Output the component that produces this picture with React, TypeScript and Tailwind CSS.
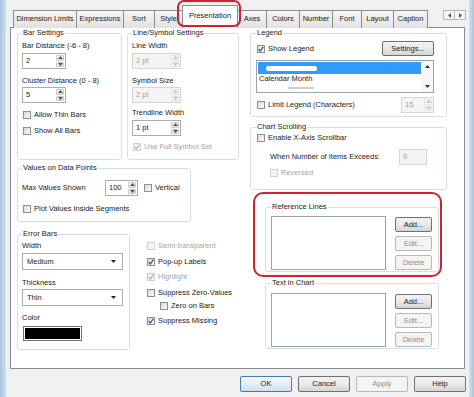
import React from "react";

const ui = "font-['Liberation_Sans',Arial,sans-serif] text-[7.5px] leading-[10px] text-[#1b1b1b]";

function Tick({ dim }: { dim?: boolean }) {
  return (
    <svg width="6" height="6" viewBox="0 0 6 6">
      <path d="M0.7 3.1 L2.3 5 L5.4 0.7" fill="none" stroke={dim ? "#a7b2c6" : "#34508e"} strokeWidth="1.2" />
    </svg>
  );
}

function Arrow({ dir, color = "#444" }: { dir: "up" | "down" | "left" | "right"; color?: string }) {
  const d = {
    up: "M0 3 L2.5 0 L5 3Z",
    down: "M0 0 L5 0 L2.5 3Z",
    left: "M3 0 L3 5 L0 2.5Z",
    right: "M0 0 L0 5 L3 2.5Z",
  }[dir];
  const vert = dir === "up" || dir === "down";
  return (
    <svg width={vert ? 5 : 3} height={vert ? 3 : 5} viewBox={vert ? "0 0 5 3" : "0 0 3 5"}>
      <path d={d} fill={color} />
    </svg>
  );
}

function Check({ label, checked, disabled, className = "" }: { label: string; checked?: boolean; disabled?: boolean; className?: string }) {
  return (
    <div className={`flex items-center h-[10px] ${className}`}>
      <span
        className={`w-[8px] h-[8px] flex items-center justify-center border ${
          disabled ? "border-[#d0d0d0] bg-[#f4f4f4]" : "border-[#8f8f8f] bg-gradient-to-br from-[#d8d8d8] to-[#fbfbfb]"
        }`}
      >
        {checked && <Tick dim={disabled} />}
      </span>
      <span className={`ml-[3px] whitespace-nowrap ${disabled ? "text-[#a5a5a5]" : ""}`}>{label}</span>
    </div>
  );
}

function Spin({ value, disabled, className = "" }: { value: string; disabled?: boolean; className?: string }) {
  const btn = disabled ? "border-[#e3e3e3] bg-[#f7f7f7]" : "border-[#cbcbcb] bg-gradient-to-b from-[#f8f8f8] to-[#e2e2e2]";
  return (
    <div
      className={`flex h-[16px] border ${disabled ? "border-[#d6d6d6] bg-[#f4f4f4] text-[#9d9d9d]" : "border-[#abadb3] bg-white"} ${className}`}
    >
      <span className="flex-1 pl-[3px] leading-[14px] whitespace-nowrap">{value}</span>
      <div className="flex flex-col w-[10px] p-[1px] gap-[1px]">
        <span className={`flex-1 flex items-center justify-center border rounded-[1px] ${btn}`}>
          <Arrow dir="up" color={disabled ? "#c4c4c4" : "#555"} />
        </span>
        <span className={`flex-1 flex items-center justify-center border rounded-[1px] ${btn}`}>
          <Arrow dir="down" color={disabled ? "#c4c4c4" : "#555"} />
        </span>
      </div>
    </div>
  );
}

function Combo({ value, className = "" }: { value: string; className?: string }) {
  return (
    <div className={`flex items-center h-[17px] border border-[#abadb3] bg-white ${className}`}>
      <span className="flex-1 pl-[4px]">{value}</span>
      <span className="mr-[6px] flex">
        <Arrow dir="down" color="#222" />
      </span>
    </div>
  );
}

function Btn({ label, disabled, focus, className = "" }: { label: string; disabled?: boolean; focus?: boolean; className?: string }) {
  const skin = disabled
    ? "border-[#b5b9bc] bg-[#f4f4f4] text-[#8e8e8e]"
    : focus
    ? "border-[#3c7fb1] bg-gradient-to-b from-[#f4f8fb] via-[#e6eef5] to-[#d2dfea]"
    : "border-[#707070] bg-gradient-to-b from-[#f3f3f3] via-[#e9e9e9] to-[#d5d5d5]";
  return (
    <div className={`h-[15px] flex items-center justify-center border rounded-[2px] ${skin} ${className}`}>{label}</div>
  );
}

function Group({ title, className = "", children }: { title: string; className?: string; children?: React.ReactNode }) {
  return (
    <fieldset className={`border border-[#d5dfe5] rounded-[3px] pl-[4px] ${className}`}>
      <legend className="px-[1px] leading-[10px]">{title}</legend>
      {children}
    </fieldset>
  );
}

function ListWithButtons({ top }: { top: string }) {
  return (
    <div className={`flex ${top}`}>
      <div className="w-[115px] h-[54px] border border-[#9ea2a8] bg-white" />
      <div className="ml-[9px] flex flex-col gap-[4px] pt-[1px]">
        <Btn label="Add..." className="w-[37px]" />
        <Btn label="Edit..." disabled className="w-[37px]" />
        <Btn label="Delete" disabled className="w-[37px]" />
      </div>
    </div>
  );
}

const tabs = [
  { name: "Dimension Limits", w: "w-[64px]" },
  { name: "Expressions", w: "w-[48px]" },
  { name: "Sort", w: "w-[32px]" },
  { name: "Style", w: "w-[29px]" },
  { name: "Presentation", w: "w-[56px]", active: true },
  { name: "Axes", w: "w-[30px]" },
  { name: "Colors", w: "w-[34px]" },
  { name: "Number", w: "w-[34px]" },
  { name: "Font", w: "w-[30px]" },
  { name: "Layout", w: "w-[33px]" },
  { name: "Caption", w: "w-[35px]" },
];

export default function App() {
  return (
    <div className={`w-[474px] h-[397px] flex bg-[#f0f0f0] overflow-hidden ${ui}`}>
      <div className="w-[7px] h-full bg-gradient-to-r from-[#a9c3df] to-[#d2e1f1] border-r border-[#eef3f9]" />

      <div className="w-[461px] flex flex-col">
        {/* tab strip */}
        <div className="relative h-[28px] flex items-end pl-[6px]">
          {tabs.map((t, i) => (
            <div
              key={t.name}
              className={`${t.w} ${i > 0 ? "-ml-[1px]" : ""} flex justify-center border-t border-l border-r border-[#898c95] whitespace-nowrap ${
                t.active ? "relative z-10 h-[23px] pt-[5px] bg-white" : "h-[18px] pt-[3px] bg-gradient-to-b from-[#f5f5f5] to-[#e2e2e2]"
              }`}
            >
              {t.name}
            </div>
          ))}
          <div className="self-start mt-[10px] ml-[15px] flex">
            <span className="w-[12px] h-[10px] flex items-center justify-center border border-[#b4b7bb] bg-[#f5f5f5]">
              <Arrow dir="left" color="#555" />
            </span>
            <span className="-ml-[1px] w-[12px] h-[10px] flex items-center justify-center border border-[#b4b7bb] bg-[#f5f5f5]">
              <Arrow dir="right" color="#555" />
            </span>
          </div>
          <div className="absolute left-[170px] top-0 w-[64px] h-[27px] border-2 border-[#d3202f] rounded-[7px] z-20" />
        </div>

        {/* tab page */}
        <div className="-mt-[1px] ml-[3px] w-[455px] h-[342px] border border-[#898c95] bg-white flex pl-[6px]">
          {/* left column */}
          <div className="w-[223px] flex flex-col">
            <div className="flex gap-[5px]">
              <Group title="Bar Settings" className="w-[105px] h-[132px]">
                <div className="mt-[3px]">Bar Distance (-6 - 8)</div>
                <Spin value="2" className="mt-[2px] w-[44px]" />
                <div className="mt-[7px]">Cluster Distance (0 - 8)</div>
                <Spin value="5" className="mt-[1px] w-[44px]" />
                <Check label="Allow Thin Bars" className="mt-[7px] ml-[1px]" />
                <Check label="Show All Bars" className="mt-[6px] ml-[1px]" />
              </Group>
              <Group title="Line/Symbol Settings" className="w-[112px] h-[132px]">
                <div className="mt-[3px]">Line Width</div>
                <Spin value="2 pt" disabled className="mt-[2px] w-[49px]" />
                <div className="mt-[7px]">Symbol Size</div>
                <Spin value="2 pt" disabled className="mt-[1px] w-[49px]" />
                <div className="mt-[5px]">Trendline Width</div>
                <Spin value="1 pt" className="mt-[2px] w-[49px]" />
                <Check label="Use Full Symbol Set" checked disabled className="mt-[6px] ml-[1px]" />
              </Group>
            </div>

            <Group title="Values on Data Points" className="mt-[3px] w-[174px] h-[59px]">
              <div className="mt-[7px] flex items-center h-[16px]">
                <span className="w-[83px]">Max Values Shown</span>
                <Spin value="100" className="w-[33px]" />
                <Check label="Vertical" className="ml-[6px]" />
              </div>
              <Check label="Plot Values Inside Segments" className="mt-[8px] ml-[1px]" />
            </Group>

            <div className="mt-[7px] flex">
              <Group title="Error Bars" className="w-[113px] h-[121px]">
                <div className="mt-[2px]">Width</div>
                <Combo value="Medium" className="mt-[2px] w-[101px]" />
                <div className="mt-[8px]">Thickness</div>
                <Combo value="Thin" className="mt-[1px] w-[101px]" />
                <div className="mt-[7px]">Color</div>
                <div className="mt-[3px] ml-[1px] w-[59px] h-[15px] border border-[#707070] p-[1px] bg-white">
                  <div className="w-full h-full bg-black" />
                </div>
              </Group>
              <div className="ml-[17px] pt-[12px] flex flex-col">
                <Check label="Semi-transparent" disabled />
                <Check label="Pop-up Labels" checked className="mt-[6px]" />
                <Check label="Highlight" checked disabled className="mt-[5px]" />
                <Check label="Suppress Zero-Values" className="mt-[6px]" />
                <Check label="Zero on Bars" className="mt-[3px] ml-[13px]" />
                <Check label="Suppress Missing" checked className="mt-[5px]" />
              </div>
            </div>
          </div>

          {/* right column */}
          <div className="ml-[10px] w-[197px] flex flex-col">
            <Group title="Legend" className="w-[197px] h-[89px] pl-[5px] pr-[12px]">
              <div className="mt-[3px] flex items-center justify-between h-[15px]">
                <Check label="Show Legend" checked className="ml-[1px]" />
                <Btn label="Settings..." className="w-[52px]" />
              </div>
              <div className="mt-[4px] h-[33px] flex border border-[#9ea2a8] bg-white">
                <div className="flex-1 flex flex-col pt-[1px] pl-[1px]">
                  <div className="h-[12px] bg-[#3399ff] flex items-center pl-[8px]">
                    <span className="w-[51px] h-[5px] bg-white rounded-[2px]" />
                  </div>
                  <div className="pl-[1px]">Calendar Month</div>
                  <div className="ml-[30px] mt-[3px] w-[26px] h-[2px] bg-[#cfcfcf]" />
                </div>
                <div className="w-[12px] flex flex-col justify-between items-center py-[4px] bg-[#f7f7f7]">
                  <Arrow dir="up" color="#333" />
                  <Arrow dir="down" color="#333" />
                </div>
              </div>
              <div className="mt-[4px] flex items-center justify-between h-[16px]">
                <Check label="Limit Legend (Characters)" className="ml-[1px]" />
                <Spin value="15" disabled className="w-[33px]" />
              </div>
            </Group>

            <Group title="Chart Scrolling" className="mt-[5px] w-[197px] h-[68px] pl-[5px]">
              <Check label="Enable X-Axis Scrollbar" className="mt-[1px] ml-[1px]" />
              <div className="mt-[6px] flex items-center h-[16px] pl-[14px]">
                <span className="w-[129px]">When Number of Items Exceeds:</span>
                <div className="w-[28px] h-[16px] border border-[#d6d6d6] bg-[#f4f4f4] text-[#9d9d9d] pl-[3px] leading-[14px]">9</div>
              </div>
              <Check label="Reversed" disabled className="mt-[3px] ml-[14px]" />
            </Group>

            <div className="mt-[2px] ml-[3px] w-[189px] h-[85px] border-2 border-[#d3202f] rounded-[10px] pl-[10px] pt-[8px]">
              <Group title="Reference Lines" className="w-[174px] h-[70px] pl-[5px]">
                <ListWithButtons top="mt-[4px]" />
              </Group>
            </div>

            <Group title="Text in Chart" className="mt-[1px] ml-[15px] w-[174px] h-[71px] pl-[5px]">
              <ListWithButtons top="mt-[5px]" />
            </Group>
          </div>
        </div>

        {/* dialog buttons */}
        <div className="flex justify-end gap-[6px] pt-[7px] pr-[2px]">
          <Btn label="OK" focus className="w-[52px] h-[16px]" />
          <Btn label="Cancel" className="w-[52px] h-[16px]" />
          <Btn label="Apply" disabled className="w-[52px] h-[16px]" />
          <Btn label="Help" className="w-[52px] h-[16px]" />
        </div>
      </div>

      <div className="w-[6px] h-full bg-gradient-to-r from-[#d2e1f1] to-[#a9c3df] border-l border-[#eef3f9]" />
    </div>
  );
}
